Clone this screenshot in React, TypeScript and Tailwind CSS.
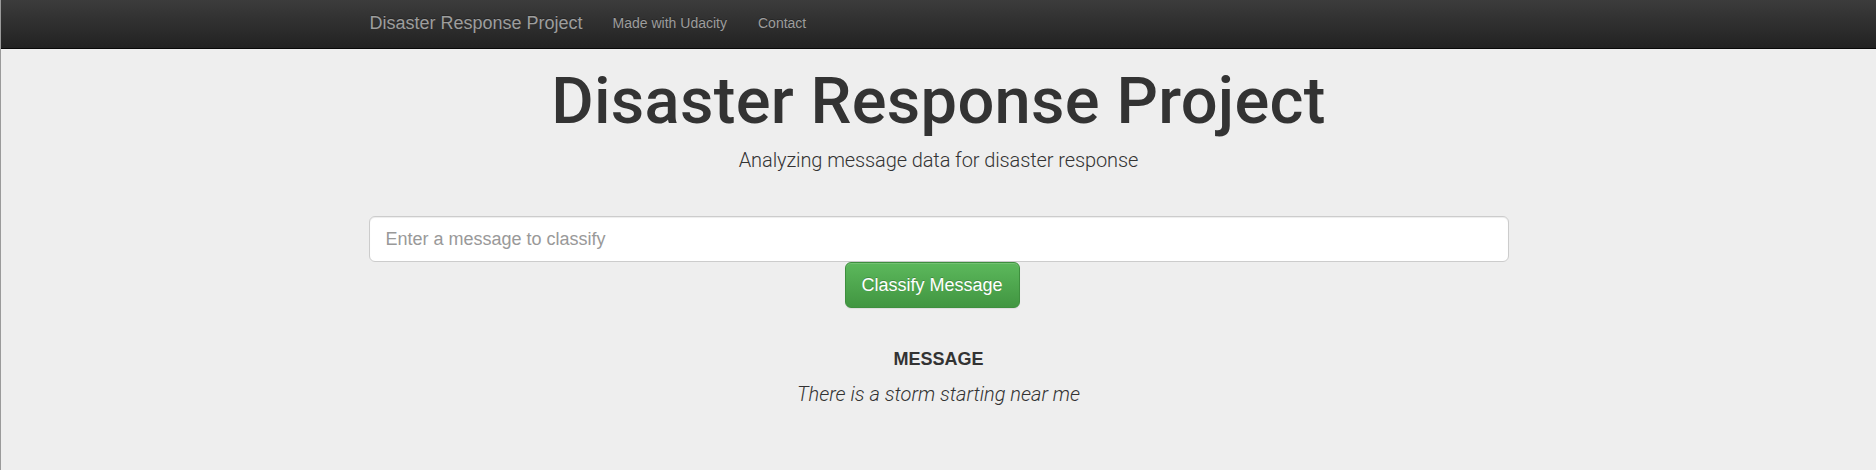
export default function App() {
  return (
    <div className="min-h-screen border-l border-[#9a9a9a] bg-[#eeeeee] font-['Liberation_Sans',Arial,sans-serif] text-[#333]">
      <header className="h-[49px] border-b border-[#080808] bg-gradient-to-b from-[#3c3c3c] to-[#222]">
        <div className="mx-auto flex h-full w-[1140px] items-center pb-[2px] [text-shadow:0_-1px_0_rgba(0,0,0,0.25)]">
          <a className="ml-px text-[18px] leading-5 text-[#9d9d9d]">Disaster Response Project</a>
          <nav className="ml-[30px] flex gap-[31px] text-[14px] leading-5 text-[#9d9d9d]">
            <a>Made with Udacity</a>
            <a>Contact</a>
          </nav>
        </div>
      </header>

      <main className="mx-auto w-[1140px]">
        <div className="pt-[17px] text-center">
          <h1 className="font-['Roboto',sans-serif] text-[65px] leading-[71px] font-medium tracking-[0.3px] text-[#333]">
            Disaster Response Project
          </h1>
          <p className="mt-2 font-['Roboto',sans-serif] text-[20px] leading-[30px] font-light tracking-[-0.1px] text-[#333]">
            Analyzing message data for disaster response
          </p>
        </div>

        <div className="mt-[41px]">
          <input
            type="text"
            placeholder="Enter a message to classify"
            className="block h-[46px] w-full rounded-[6px] border border-[#ccc] bg-white px-4 text-[18px] text-[#555] shadow-[inset_0_1px_1px_rgba(0,0,0,0.075)] outline-none placeholder:text-[#999]"
          />
          <div className="flex pl-[476px]">
            <button className="h-[46px] w-[175px] rounded-[6px] border border-[#3e8f3e] bg-gradient-to-b from-[#5cb85c] to-[#419641] text-[18px] text-white shadow-[inset_0_1px_0_rgba(255,255,255,0.15),0_1px_1px_rgba(0,0,0,0.075)] [text-shadow:0_-1px_0_rgba(0,0,0,0.2)]">
              Classify Message
            </button>
          </div>
        </div>

        <div className="mt-[41px] text-center">
          <h4 className="text-[18px] leading-5 font-bold">MESSAGE</h4>
          <p className="mt-[10px] font-['Roboto',sans-serif] text-[20px] leading-[30px] font-light italic text-[#333]">
            There is a storm starting near me
          </p>
        </div>
      </main>
    </div>
  );
}
